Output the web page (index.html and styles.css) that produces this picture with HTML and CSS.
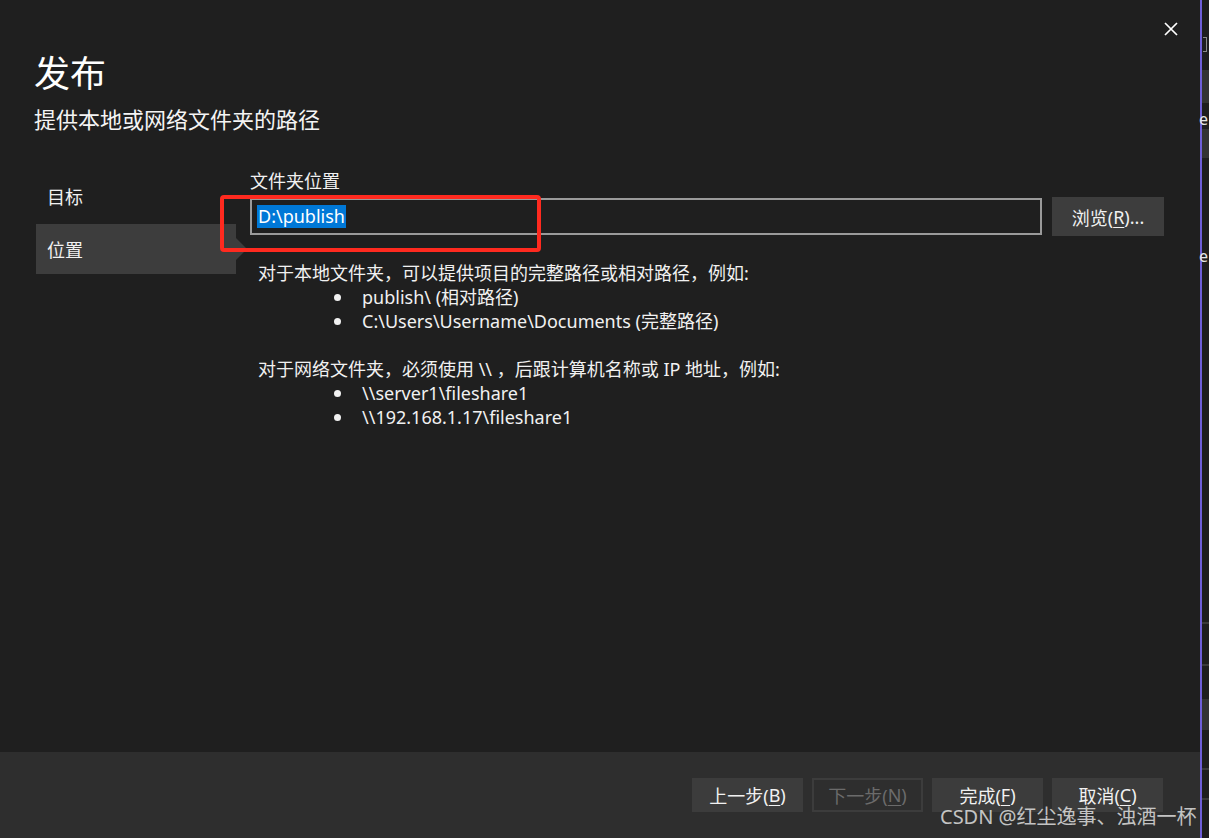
FILE: index.html
```html
<!DOCTYPE html>
<html lang="zh-CN">
<head>
<meta charset="utf-8">
<title>发布</title>
<link rel="stylesheet" href="styles.css">
</head>
<body>
<div class="screen">
  <div class="dialog">
    <div class="main">
      <div class="header">
        <div class="titles">
          <div class="title">发布</div>
          <div class="subtitle">提供本地或网络文件夹的路径</div>
        </div>
        <div class="close">
          <svg width="14" height="14" viewBox="0 0 14 14"><path d="M1 1 L13 13 M13 1 L1 13" stroke="#ffffff" stroke-width="1.7" fill="none"/></svg>
        </div>
      </div>
      <div class="body">
        <div class="sidebar">
          <div class="nav-item">目标</div>
          <div class="nav-item selected">位置</div>
        </div>
        <div class="content">
          <div class="label">文件夹位置</div>
          <div class="input-row">
            <div class="input"><span class="sel">D:\publish</span></div>
            <div class="btn browse">浏览(<u>R</u>)...</div>
          </div>
          <div class="help">
            <p>对于本地文件夹，可以提供项目的完整路径或相对路径，例如:</p>
            <ul>
              <li>publish\ (相对路径)</li>
              <li>C:\Users\Username\Documents (完整路径)</li>
            </ul>
            <p class="gap">对于网络文件夹，必须使用 \\ ，后跟计算机名称或 IP 地址，例如:</p>
            <ul>
              <li>\\server1\fileshare1</li>
              <li>\\192.168.1.17\fileshare1</li>
            </ul>
          </div>
        </div>
      </div>
    </div>
    <div class="footer">
      <div class="btn fbtn">上一步(<u>B</u>)</div>
      <div class="btn fbtn disabled">下一步(<u>N</u>)</div>
      <div class="btn fbtn">完成(<u>F</u>)</div>
      <div class="btn fbtn">取消(<u>C</u>)</div>
    </div>
  </div>
  <div class="edge"></div>
  <div class="strip">
    <div class="s-gap" style="height:37px"></div>
    <div class="s-bracket"></div>
    <div class="s-gap" style="height:18px"></div>
    <div class="s-bar" style="height:33px"></div>
    <div class="s-gap" style="height:10px"></div>
    <div class="s-text">e</div>
    <div class="s-gap" style="height:3px"></div>
    <div class="s-bar" style="height:29px"></div>
    <div class="s-gap" style="height:92px"></div>
    <div class="s-text">e</div>
    <div class="s-gap" style="height:359px"></div>
    <div class="s-line"></div>
    <div class="s-gap" style="height:40px"></div>
    <div class="s-line"></div>
    <div class="s-gap" style="height:33px"></div>
    <div class="s-bar" style="height:31px"></div>
    <div class="s-gap" style="height:38px"></div>
    <div class="s-line"></div>
    <div class="s-gap" style="height:28px"></div>
    <div class="s-line"></div>
  </div>
  <div class="annot"></div>
  <div class="watermark">CSDN @红尘逸事、浊酒一杯</div>
</div>
</body>
</html>
```
FILE: styles.css
```css
* { box-sizing: border-box; }
html, body { margin: 0; padding: 0; background: #1e1e1e; }
body {
  font-family: "Noto Sans", "Noto Sans CJK SC", sans-serif;
  color: #f1f1f1;
}
.screen {
  position: relative;
  width: 1209px;
  height: 838px;
  display: flex;
  overflow: hidden;
}
.dialog {
  width: 1200px;
  height: 838px;
  display: flex;
  flex-direction: column;
  background: #1f1f1f;
}
.main { flex: 1; display: flex; flex-direction: column; }
.header {
  display: flex;
  justify-content: space-between;
  align-items: flex-start;
  padding: 22px 22px 0 34px;
}
.titles { padding-top: 25px; }
.title {
  font-size: 36px;
  line-height: 48px;
  color: #ffffff;
  font-family: "Noto Sans CJK SC", sans-serif;
}
.subtitle {
  margin-top: 8px;
  font-size: 22px;
  line-height: 30px;
  color: #f4f4f4;
  font-family: "Noto Sans CJK SC", sans-serif;
}
.close { width: 14px; height: 14px; display: flex; }
.body {
  display: flex;
  padding: 36px 36px 0 36px;
}
.sidebar {
  width: 200px;
  padding-top: 5px;
  display: flex;
  flex-direction: column;
}
.nav-item {
  position: relative;
  height: 50px;
  padding-left: 11px;
  font-size: 18px;
  line-height: 44px;
  font-family: "Noto Sans CJK SC", sans-serif;
}
.nav-item.selected { background: #3d3d3d; line-height: 50px; }
.nav-item.selected::after {
  content: "";
  position: absolute;
  left: 200px;
  top: 14px;
  width: 0;
  height: 0;
  border-left: 11px solid #3d3d3d;
  border-top: 11px solid transparent;
  border-bottom: 11px solid transparent;
}
.content { flex: 1; margin-left: 14px; }
.label {
  font-size: 18px;
  line-height: 22px;
  font-family: "Noto Sans CJK SC", sans-serif;
}
.input-row {
  margin-top: 6px;
  display: flex;
  align-items: center;
  gap: 10px;
}
.input {
  flex: 1;
  height: 37px;
  border: 2px solid #9a9a9a;
  padding-left: 5px;
  display: flex;
  align-items: center;
}
.sel {
  background: #0078d7;
  color: #ffffff;
  font-size: 18px;
  line-height: 23px;
  padding: 0 1px;
}
.btn {
  display: flex;
  align-items: center;
  justify-content: center;
  background: #3d3d3d;
  font-size: 18px;
  color: #f1f1f1;
}
.btn u { text-underline-offset: 3px; text-decoration-thickness: 1px; }
.browse { width: 112px; height: 39px; }
.help { margin-top: 25px; padding-left: 8px; font-size: 18px; line-height: 24px; }
.help p { margin: 0; }
.help p.gap { margin-top: 24px; }
.help ul { list-style: none; margin: 0; padding: 0; }
.help li { display: flex; align-items: center; padding-left: 76px; }
.help li::before {
  content: "";
  width: 7px;
  height: 7px;
  border-radius: 50%;
  background: #f1f1f1;
  margin-right: 21px;
  flex: none;
}
.footer {
  height: 86px;
  background: #2e2e2e;
  display: flex;
  justify-content: flex-end;
  align-items: flex-start;
  gap: 9px;
  padding: 26px 37px 0 0;
}
.fbtn { width: 111px; height: 34px; background: #3c3c3c; }
.fbtn.disabled {
  background: transparent;
  border: 2px solid #3c3c3c;
  color: #6b6b6b;
}
.edge { width: 2px; height: 838px; background: #6e5ed8; }
.strip {
  width: 7px;
  height: 838px;
  background: #1e1e1e;
  display: flex;
  flex-direction: column;
}
.s-gap { flex: none; }
.s-bracket {
  width: 4px;
  height: 15px;
  margin-left: 1px;
  border: 1px solid #8a8a8a;
  border-left: none;
}
.s-bar { background: #333333; flex: none; }
.s-text {
  font-size: 16px;
  line-height: 13px;
  height: 13px;
  color: #e6e6e6;
  margin-left: -3px;
}
.s-line { height: 2px; background: #3a3a3a; flex: none; }
.annot {
  position: absolute;
  left: 220px;
  top: 195px;
  width: 321px;
  height: 57px;
  border: 4px solid #ff2a1f;
  border-radius: 4px;
}
.watermark {
  position: absolute;
  left: 940px;
  top: 803px;
  font-size: 20px;
  line-height: 28px;
  color: rgba(230, 230, 230, 0.82);
  white-space: nowrap;
}
```
